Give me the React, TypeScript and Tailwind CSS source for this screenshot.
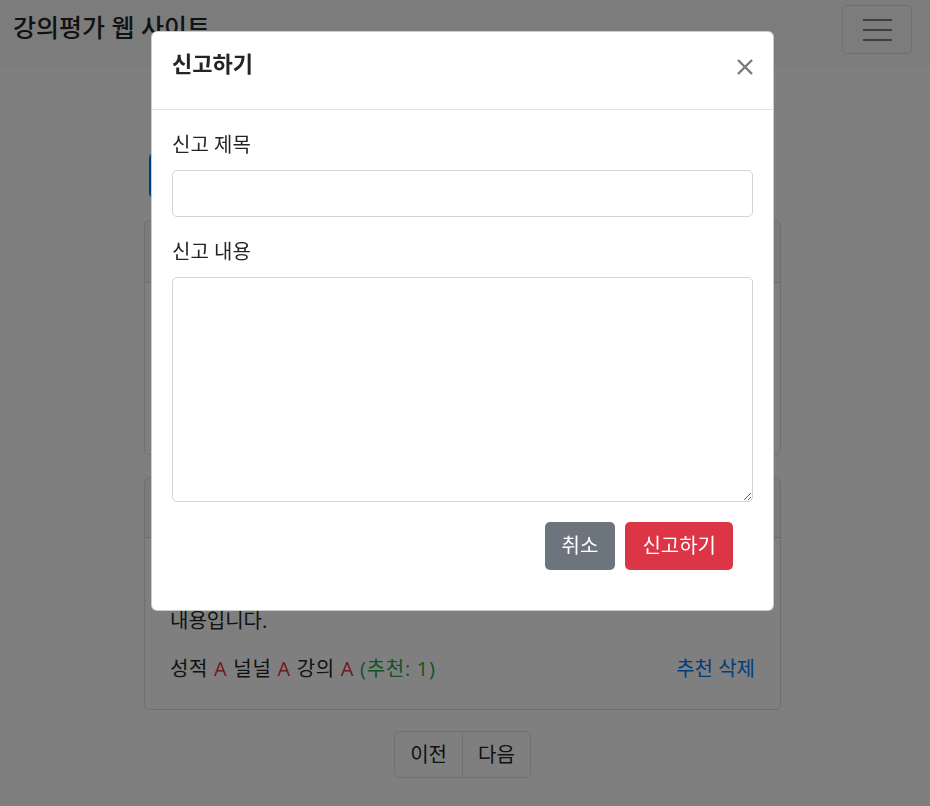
export default function App() {
  return (
    <div className="relative min-h-[806px] bg-white text-[#212529] text-[20px] leading-[30px] font-['Open_Sans','Noto_Sans_CJK_KR',sans-serif]">
      {/* Navbar */}
      <div className="h-[66px] bg-[#f8f9fa] flex justify-between items-start pl-[13px] pr-[18px] pt-[5px]">
        <span className="text-[25px] leading-[37px] mt-[4px] font-medium">강의평가 웹 사이트</span>
        <div className="w-[70px] h-[49px] border border-black/10 rounded-[5px] flex flex-col items-center justify-center gap-[8px]">
          <span className="block w-[29px] h-[2px] bg-black/50" />
          <span className="block w-[29px] h-[2px] bg-black/50" />
          <span className="block w-[29px] h-[2px] bg-black/50" />
        </div>
      </div>

      {/* Container */}
      <div className="ml-[144px] w-[637px]">
        <div className="mt-[87px] ml-[5px] h-[45px] w-[110px] bg-[#007bff] rounded-[5px]" />

        <div className="mt-[22px] h-[235px] border border-black/[0.125] rounded-[5px] overflow-hidden flex flex-col">
          <div className="h-[62px] bg-black/[0.03] border-b border-black/[0.125]" />
          <div className="flex-1" />
        </div>

        <div className="mt-[22px] border border-black/[0.125] rounded-[5px] overflow-hidden">
          <div className="h-[60px] bg-black/[0.03] border-b border-black/[0.125]" />
          <div className="px-[25px] pt-[25px] pb-[25px]">
            <div className="text-[25px] leading-[30px] font-medium mb-[13px]">강의 제목 (2020년 1학기)</div>
            <p className="mb-[18px]">내용입니다.</p>
            <div className="flex justify-between">
              <div className="tracking-[0.7px]">
                성적 <span className="text-[#dc3545]">A</span> 널널 <span className="text-[#dc3545]">A</span> 강의{' '}
                <span className="text-[#dc3545]">A</span> <span className="text-[#28a745]">(추천: 1)</span>
              </div>
              <div className="text-[#007bff]">
                <span>추천</span> <span>삭제</span>
              </div>
            </div>
          </div>
        </div>

        <div className="mt-[21px] flex justify-center">
          <div className="flex">
            <span className="px-[15px] py-[10px] leading-[25px] border border-[#dee2e6] rounded-l-[5px] bg-white">이전</span>
            <span className="-ml-px px-[15px] py-[10px] leading-[25px] border border-[#dee2e6] rounded-r-[5px] bg-white">다음</span>
          </div>
        </div>
      </div>

      {/* Overlay */}
      <div className="fixed inset-0 bg-black/50" />

      {/* Modal */}
      <div className="absolute left-[151px] top-[31px] w-[623px] bg-white rounded-[6px] border border-black/20">
        <div className="h-[78px] flex justify-between items-start px-[20px] pt-[16px] border-b border-[#dee2e6]">
          <span className="text-[22px] leading-[30px] font-bold">신고하기</span>
          <svg width="16" height="16" viewBox="0 0 16 16" className="mt-[11px]">
            <path d="M1 1 L15 15 M15 1 L1 15" stroke="#7a7a7a" strokeWidth="2.4" strokeLinecap="butt" />
          </svg>
        </div>
        <div className="p-[20px]">
          <label className="block leading-[30px] mb-[10px]">신고 제목</label>
          <input className="block w-full h-[47px] border border-[#ced4da] rounded-[5px] mb-[20px] outline-none px-[15px]" />
          <label className="block leading-[30px] mb-[10px]">신고 내용</label>
          <textarea className="block w-full h-[225px] border border-[#ced4da] rounded-[5px] mb-[20px] outline-none px-[15px] py-[7px]" />
          <div className="flex justify-end gap-[10px] pr-[20px] mb-[20px]">
            <button className="h-[48px] px-[17px] rounded-[5px] bg-[#6c757d] text-white leading-[30px]">취소</button>
            <button className="h-[48px] px-[17px] rounded-[5px] bg-[#dc3545] text-white leading-[30px]">신고하기</button>
          </div>
        </div>
      </div>
    </div>
  );
}
